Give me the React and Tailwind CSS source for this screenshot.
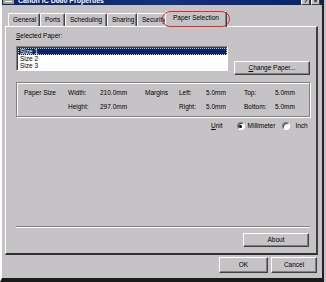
import React from "react";

const font = "font-['Liberation_Sans',Arial,sans-serif]";

function Button({ children, className = "" }) {
  return (
    <div
      className={
        "flex items-center justify-center border border-t-white border-l-white border-r-[#404040] border-b-[#404040] shadow-[inset_-1px_-1px_0_#808080] bg-[#c6c3c6] text-[6.5px] leading-none text-black " +
        className
      }
    >
      {children}
    </div>
  );
}

function Radio({ checked }) {
  return (
    <span className="flex h-[8px] w-[8px] items-center justify-center rounded-full border border-t-[#808080] border-l-[#808080] border-r-white border-b-white bg-white shadow-[inset_1px_1px_0_#404040]">
      {checked && <span className="h-[3px] w-[3px] rounded-full bg-black" />}
    </span>
  );
}

function Tab({ label, className }) {
  return (
    <div
      className={
        "h-[13px] overflow-hidden whitespace-nowrap rounded-t-[2px] border-t border-l border-r border-t-white border-l-white border-r-[#404040] shadow-[inset_-1px_0_0_#808080] text-[6.5px] leading-[11px] " +
        className
      }
    >
      {label}
    </div>
  );
}

export default function App() {
  const rows = [
    ["Paper Size", "Width:", "210.0mm", "Margins", "Left:", "5.0mm", "Top:", "5.0mm"],
    ["", "Height:", "297.0mm", "", "Right:", "5.0mm", "Bottom:", "5.0mm"],
  ];

  return (
    <div className={`h-[282px] w-[326px] overflow-hidden bg-[#c6c3c6] text-black ${font}`}>
      <div className="flex h-[282px] w-[324px] flex-col border-l-2 border-l-white border-r-2 border-r-[#202020] border-b-[4px] border-b-[#1a1a1a]">
        {/* Title bar (cropped) */}
        <div className="h-[5px] overflow-hidden bg-gradient-to-r from-[#0a246a] via-[#14307a] to-[#0a246a]">
          <div className="mt-[-4px] flex h-[9px] items-center pl-[1px] pr-[2px]">
            <svg width="11" height="9" viewBox="0 0 11 9" className="mr-[4px]">
              <rect x="1" y="0" width="9" height="4" fill="#d8d8d8" />
              <rect x="0" y="4" width="11" height="4" fill="#a0a0a0" />
              <rect x="2" y="5" width="7" height="1" fill="#ffffff" />
            </svg>
            <span className="text-[7px] font-bold leading-none text-white">Canon iC D660 Properties</span>
            <div className="ml-auto flex gap-[1px]">
              <div className="flex h-[9px] w-[9px] items-end justify-center border border-t-white border-l-white border-r-[#404040] border-b-[#404040] bg-[#c6c3c6] text-[6px] font-bold leading-none">?</div>
              <div className="flex h-[9px] w-[9px] items-end justify-center border border-t-white border-l-white border-r-[#404040] border-b-[#404040] bg-[#c6c3c6] text-[6px] font-bold leading-none">×</div>
            </div>
          </div>
        </div>

        <div className="flex flex-1 flex-col pl-[3px] pr-[4px]">
          {/* Tabs */}
          <div className="mt-[6px] flex h-[15px] items-end pl-[3px]">
            <Tab label="General" className="w-[32px] pl-[4px]" />
            <Tab label="Ports" className="w-[25px] pl-[4px]" />
            <Tab label="Scheduling" className="w-[42px] pl-[4px]" />
            <Tab label="Sharing" className="w-[30px] pl-[4px]" />
            <Tab label="Security" className="w-[30px] pl-[4px]" />
            <div className="relative z-10 -ml-[2px] mb-[-1px] h-[16px] w-[62px] rounded-t-[2px] border-t border-l border-r border-t-white border-l-white border-r-[#404040] bg-[#c6c3c6] pl-[7px] text-[6.5px] leading-[12px] shadow-[inset_-1px_0_0_#808080]">
              Paper Selection
              <div className="absolute left-[-4px] top-[-1px] h-[16px] w-[68px] rounded-[8px] border-[1.5px] border-[#e0282f]" />
            </div>
          </div>

          {/* Panel */}
          <div className="flex h-[229px] w-[313px] flex-col border-t border-l border-t-white border-l-white border-r-2 border-b-2 border-r-[#404040] border-b-[#303030] pl-[10px] pr-[5px] pt-[5px] pb-[6px] text-[6.5px] leading-[8px]">
            <div>
              <u>S</u>elected Paper:
            </div>
            <div className="mt-[6px] flex items-start">
              <div className="h-[25px] w-[212px] border border-t-[#808080] border-l-[#808080] border-r-white border-b-white bg-white shadow-[inset_1px_1px_0_#404040] pl-[1px] pt-[1px] leading-[7px]">
                <div className="h-[7px] bg-[#0a246a] pl-[2px] text-white outline outline-1 outline-dotted outline-[#d8d070] -outline-offset-1">Size 1</div>
                <div className="h-[7px] pl-[2px]">Size 2</div>
                <div className="h-[7px] pl-[2px]">Size 3</div>
              </div>
              <Button className="ml-[6px] mt-[15px] h-[14px] w-[76px]">
                <span>
                  <u>C</u>hange Paper...
                </span>
              </Button>
            </div>

            {/* Paper size group */}
            <div className="mt-[7px] h-[35px] w-[294px] border border-[#808080] pl-[7px] pt-[6px] shadow-[1px_1px_0_white,inset_1px_1px_0_white]">
              <div className="grid grid-cols-[44px_32px_45px_34px_27px_38px_31px_auto] gap-y-[6px]">
                {rows.map((r, i) =>
                  r.map((c, j) => <div key={i + "-" + j}>{c}</div>)
                )}
              </div>
            </div>

            {/* Unit */}
            <div className="mt-[5px] flex h-[8px] w-[294px] items-center">
              <span className="ml-[195px]">
                <u>U</u>nit
              </span>
              <span className="ml-[14px]">
                <Radio checked />
              </span>
              <span className="ml-[3px]">Millimeter</span>
              <span className="ml-[7px]">
                <Radio />
              </span>
              <span className="ml-[5px]">Inch</span>
            </div>

            <div className="flex-1" />

            <div className="h-[2px] w-[294px] border-t border-t-[#808080] border-b border-b-white" />
            <div className="mt-[5px] flex w-[294px] justify-end pr-[1px]">
              <Button className="h-[14px] w-[66px]">About</Button>
            </div>
          </div>

          {/* Dialog buttons */}
          <div className="mt-[2px] flex h-[16px] w-[313px] justify-end gap-[3px] pr-[1px]">
            <Button className="h-[16px] w-[49px]">OK</Button>
            <Button className="h-[16px] w-[46px]">Cancel</Button>
          </div>
        </div>
      </div>
    </div>
  );
}
